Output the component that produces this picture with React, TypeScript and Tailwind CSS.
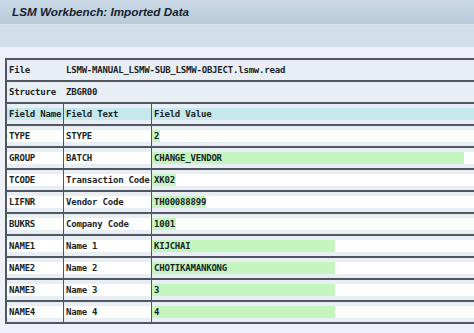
const mono = { fontFamily: '"DejaVu Sans Mono", "Liberation Mono", monospace' };

type Row = { name: string; text: string; value: string; fill: number | "full" };

const rows: Row[] = [
  { name: "TYPE", text: "STYPE", value: "2", fill: 8 },
  { name: "GROUP", text: "BATCH", value: "CHANGE_VENDOR", fill: 312 },
  { name: "TCODE", text: "Transaction Code", value: "XK02", fill: 24 },
  { name: "LIFNR", text: "Vendor Code", value: "TH00088899", fill: 54 },
  { name: "BUKRS", text: "Company Code", value: "1001", fill: 24 },
  { name: "NAME1", text: "Name 1", value: "KIJCHAI", fill: 183 },
  { name: "NAME2", text: "Name 2", value: "CHOTIKAMANKONG", fill: 183 },
  { name: "NAME3", text: "Name 3", value: "3", fill: 183 },
  { name: "NAME4", text: "Name 4", value: "4", fill: 183 },
];

function Divider() {
  return <div className="w-px shrink-0 bg-[#4f5760]" />;
}

export default function App() {
  return (
    <div className="flex h-[333px] w-[474px] flex-col overflow-hidden bg-[#eef2f8]">
      {/* Title bar */}
      <div className="flex h-6 items-center bg-gradient-to-b from-[#cbd9e6] to-[#b7cbdc] pl-3">
        <span
          className="text-[11.7px] font-bold italic text-[#17212c]"
          style={{ fontFamily: '"Liberation Sans", Arial, sans-serif' }}
        >
          LSM Workbench: Imported Data
        </span>
      </div>
      {/* Toolbar */}
      <div className="h-[23px] border-t border-[#dde7ef] bg-[#d2dee8]" />

      {/* Table */}
      <div className="ml-[5px] mt-[11px] border-l-2 border-[#4f5760] text-[9px] font-bold tracking-[-0.2px] text-[#1a1f26]" style={mono}>
        <div className="flex h-[22px] items-center border-t-2 border-[#4f5760] bg-[#e9eef5]">
          <span className="w-[57px] shrink-0 pl-[2px] leading-3">File</span>
          <span className="pl-[2px] leading-3">LSMW-MANUAL_LSMW-SUB_LSMW-OBJECT.lsmw.read</span>
        </div>
        <div className="flex h-[22px] items-center border-t-2 border-[#4f5760] bg-[#e9eef5]">
          <span className="w-[57px] shrink-0 pl-[2px] leading-3">Structure</span>
          <span className="pl-[2px] leading-3">ZBGR00</span>
        </div>

        {/* Header */}
        <div className="flex h-[22px] border-t-2 border-[#4f5760] bg-[#e9eef5]">
          <div className="w-[56px] shrink-0 py-1">
            <div className="h-3 bg-[#c4e8ec] pl-[2px] leading-3">Field Name</div>
          </div>
          <Divider />
          <div className="w-[87px] shrink-0 py-1">
            <div className="h-3 bg-[#c4e8ec] pl-[2px] leading-3">Field Text</div>
          </div>
          <Divider />
          <div className="flex-1 py-1">
            <div className="h-3 bg-[#c4e8ec] pl-[2px] leading-3">Field Value</div>
          </div>
        </div>

        {rows.map((r) => (
          <div key={r.name} className="flex h-[22px] border-t-2 border-[#4f5760] bg-[#e9eef5]">
            <div className="w-[56px] shrink-0 py-1">
              <div className="h-3 bg-white pl-[2px] leading-3">{r.name}</div>
            </div>
            <Divider />
            <div className="w-[87px] shrink-0 py-1">
              <div className="h-3 bg-white pl-[2px] leading-3">{r.text}</div>
            </div>
            <Divider />
            <div className="flex-1 py-1">
              <div className="relative h-3 bg-white">
                <div className="h-3 bg-[#c4f5bf]" style={{ width: r.fill === "full" ? "100%" : r.fill }} />
                <span className="absolute left-0 top-0 pl-[2px] leading-3 whitespace-nowrap">{r.value}</span>
              </div>
            </div>
          </div>
        ))}
        <div className="border-t-2 border-[#4f5760]" />
      </div>
    </div>
  );
}
